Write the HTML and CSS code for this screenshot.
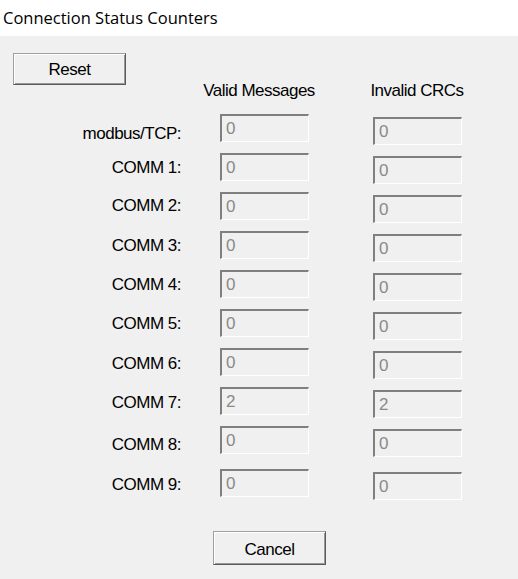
FILE: index.html
```html
<!DOCTYPE html>
<html>
<head>
<meta charset="utf-8">
<title>Connection Status Counters</title>
<link rel="stylesheet" href="styles.css">
</head>
<body>
<div class="titlebar">Connection Status Counters</div>
<div class="panel">
  <div class="toprow">
    <button class="btn reset">Reset</button>
    <div class="colhead first">Valid Messages</div>
    <div class="colhead second">Invalid CRCs</div>
  </div>
  <div class="rows">
    <div class="row"><div class="label down6">modbus/TCP:</div><div class="field">0</div><div class="field right">0</div></div>
    <div class="row"><div class="label">COMM 1:</div><div class="field">0</div><div class="field right">0</div></div>
    <div class="row"><div class="label up1">COMM 2:</div><div class="field">0</div><div class="field right">0</div></div>
    <div class="row"><div class="label">COMM 3:</div><div class="field">0</div><div class="field right">0</div></div>
    <div class="row"><div class="label">COMM 4:</div><div class="field">0</div><div class="field right">0</div></div>
    <div class="row"><div class="label">COMM 5:</div><div class="field">0</div><div class="field right">0</div></div>
    <div class="row"><div class="label down1">COMM 6:</div><div class="field">0</div><div class="field right">0</div></div>
    <div class="row"><div class="label down1">COMM 7:</div><div class="field">2</div><div class="field right">2</div></div>
    <div class="row"><div class="label down4">COMM 8:</div><div class="field">0</div><div class="field right">0</div></div>
    <div class="row last"><div class="label down1">COMM 9:</div><div class="field">0</div><div class="field right">0</div></div>
  </div>
  <div class="footer">
    <button class="btn cancel">Cancel</button>
  </div>
</div>
</body>
</html>
```
FILE: styles.css
```css
html, body {
  margin: 0;
  padding: 0;
  background: #f0f0f0;
}
body {
  width: 518px;
  height: 579px;
  overflow: hidden;
  font-family: "Liberation Sans", Arial, sans-serif;
  color: #000;
}
.titlebar {
  height: 36px;
  box-sizing: border-box;
  padding: 7px 0 0 3px;
  background: #fff;
  font-family: "Open Sans", "Noto Sans", sans-serif;
  font-size: 16.5px;
  line-height: 22px;
  color: #000;
}
.panel {
  background: #f0f0f0;
  height: 543px;
}
.toprow {
  display: flex;
  align-items: flex-start;
  padding-top: 17px;
  height: 61px;
}
.btn {
  width: 113px;
  height: 32px;
  box-sizing: border-box;
  background: #f0f0f0;
  border: 1px solid;
  border-color: #a0a0a0 #5a5a5a #5a5a5a #a0a0a0;
  box-shadow: inset 1px 1px 0 #ffffff, inset -1px -1px 0 #9a9a9a;
  font-family: "Liberation Sans", Arial, sans-serif;
  font-size: 17px;
  letter-spacing: -0.5px;
  color: #000;
  padding: 1px 0 0 0;
  display: flex;
  align-items: center;
  justify-content: center;
}
.reset {
  margin-left: 13px;
}
.colhead {
  width: 122px;
  text-align: center;
  font-size: 17px;
  line-height: 20px;
  letter-spacing: -0.5px;
  margin-top: 28px;
}
.colhead.first {
  margin-left: 72px;
}
.colhead.second {
  margin-left: 36px;
}
.rows {
  display: flex;
  flex-direction: column;
  gap: 11px;
}
.row {
  display: flex;
  align-items: flex-start;
  height: 28px;
}
.row.last {
  margin-top: 4px;
}
.label {
  width: 181px;
  text-align: right;
  font-size: 17px;
  line-height: 20px;
  letter-spacing: -0.5px;
  margin-top: 5px;
}
.label.up1 { margin-top: 4px; }
.label.down1 { margin-top: 6px; }
.label.down4 { margin-top: 9px; }
.label.down6 { margin-top: 10px; }
.field {
  width: 89px;
  height: 28px;
  box-sizing: border-box;
  margin-left: 39px;
  border-style: solid;
  border-width: 2px 1px 1px 2px;
  border-color: #7f7f7f #ffffff #ffffff #7f7f7f;
  background: #f0f0f0;
  padding: 3px 0 0 4px;
  font-size: 17px;
  line-height: 20px;
  color: #8a8a8a;
}
.field.right {
  margin-left: 64px;
  margin-top: 3px;
}
.footer {
  display: flex;
  padding-top: 34px;
  padding-left: 213px;
}
.cancel {
  height: 34px;
  padding-top: 3px;
}
```
